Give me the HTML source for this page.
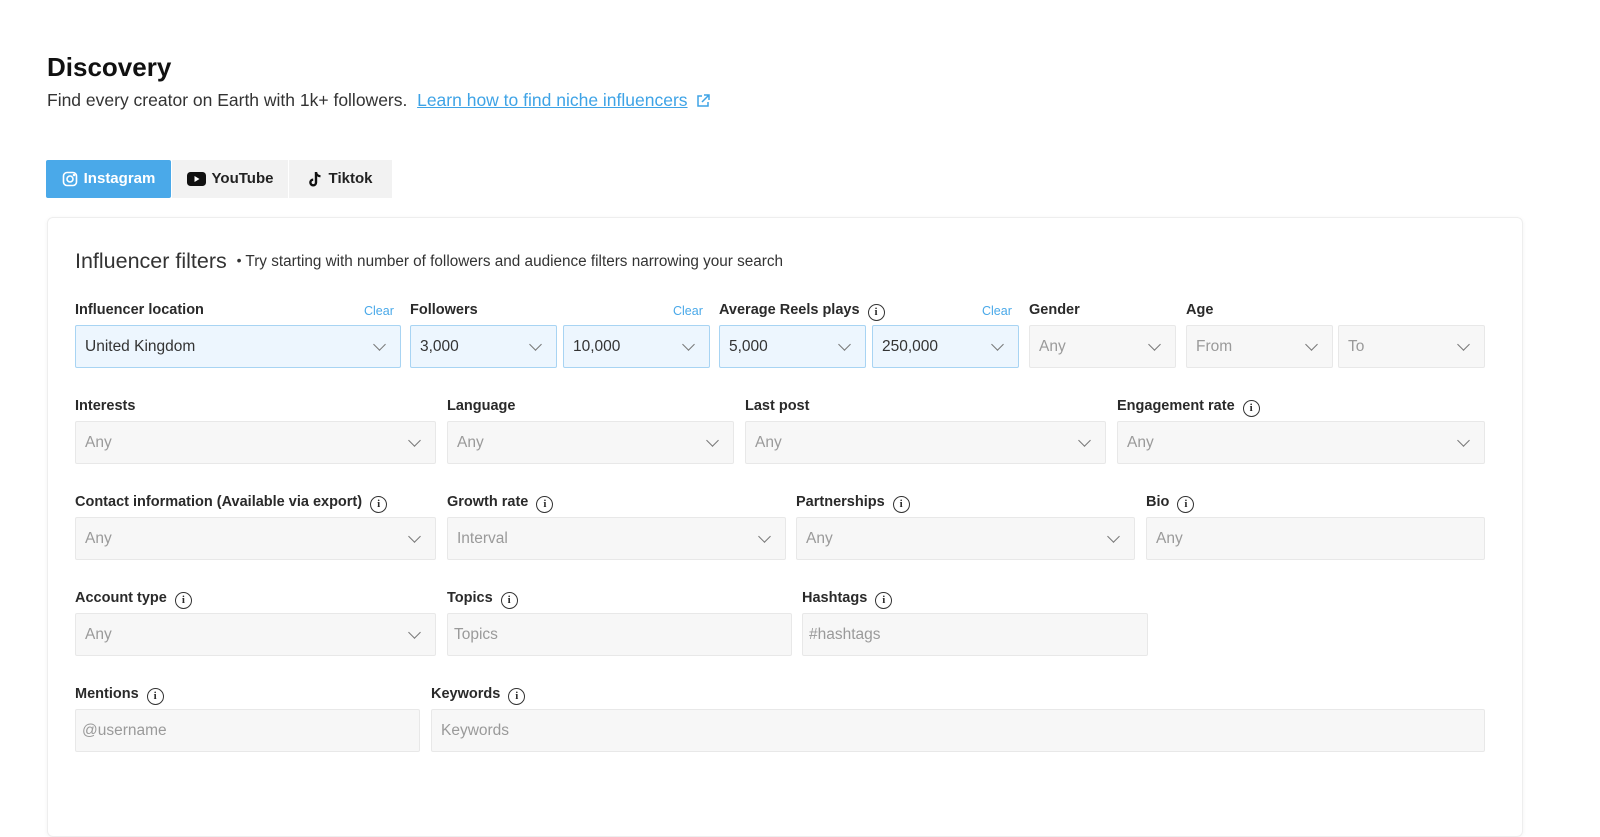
<!DOCTYPE html>
<html><head><meta charset="utf-8"><style>
*{box-sizing:border-box;margin:0;padding:0}
body{width:1600px;height:810px;background:#fff;font-family:"Liberation Sans",sans-serif;color:#222;position:relative;overflow:hidden}
.a{position:absolute}
.lbl{position:absolute;font-size:14.5px;font-weight:bold;color:#2a2a2a;line-height:18px;white-space:nowrap}
.lbl .i{display:inline-block;width:17px;height:17px;border:1.5px solid #333;border-radius:50%;font-size:11px;text-align:center;line-height:14px;margin-left:8px;vertical-align:-1px;font-family:"Liberation Serif",serif;font-weight:bold}
.clr{position:absolute;font-size:12.5px;color:#4aa9e9;line-height:16px}
.f{position:absolute;height:43px;background:#f7f7f7;border:1px solid #e8e8e8;border-radius:2px;font-size:15.5px;color:#9a9a9a;line-height:41px;padding-left:9px;white-space:nowrap}
.f.s{background:#edf6fe;border-color:#a8d4f3;color:#333}
.f.c::after{content:"";position:absolute;right:16px;top:14px;width:8px;height:8px;border-right:1.6px solid #777;border-bottom:1.6px solid #777;transform:rotate(45deg)}
.tab{position:absolute;top:160px;height:38px;background:#f2f2f2;font-size:15px;font-weight:bold;line-height:38px;display:flex;align-items:center;justify-content:center;gap:6px}
</style></head><body>
<div class="a" style="left:47px;top:52px;font-size:26px;font-weight:bold;color:#111">Discovery</div>
<div class="a" style="left:47px;top:90px;font-size:17.5px;color:#333;white-space:nowrap">Find every creator on Earth with 1k+ followers. &nbsp;<span style="color:#3ea3e6;text-decoration:underline">Learn how to find niche influencers</span>
<svg width="14" height="14" viewBox="0 0 14 14" style="vertical-align:-2px;margin-left:4px" fill="none" stroke="#3ea3e6" stroke-width="1.5"><path d="M6 2H2v10h10V8M8 1h5v5M13 1L6 8"/></svg></div>

<div class="tab" style="left:46px;width:125px;background:#4aa9e9;color:#fff;border-radius:2px"><svg width="16" height="16" viewBox="0 0 16 16" fill="none" stroke="#fff" stroke-width="1.6"><rect x="1.5" y="1.5" width="13" height="13" rx="3.5"/><circle cx="8" cy="8" r="3"/><circle cx="12" cy="4" r=".5" fill="#fff"/></svg>Instagram</div>
<div class="tab" style="left:172px;width:116px;color:#222"><svg width="19" height="14" viewBox="0 0 19 14"><rect width="19" height="14" rx="3.5" fill="#111"/><path d="M7.5 4v6l5-3z" fill="#fff"/></svg>YouTube</div>
<div class="tab" style="left:289px;width:103px;color:#222"><svg width="14" height="17" viewBox="0 0 14 17"><path d="M7 1v10.5a2.8 2.8 0 1 1-2.8-2.8" fill="none" stroke="#111" stroke-width="2.4"/><path d="M7 1.5c.5 2.2 2 3.6 4.5 3.8" fill="none" stroke="#111" stroke-width="2.2"/></svg>Tiktok</div>

<div class="a" style="left:47px;top:217px;width:1476px;height:620px;border:1px solid #eee;border-radius:6px;box-shadow:0 1px 4px rgba(0,0,0,.05)"></div>
<div class="a" style="left:75px;top:249px;font-size:21.5px;color:#333;white-space:nowrap">Influencer filters <span style="font-size:14px;color:#333;vertical-align:3px">&nbsp;•&nbsp;</span><span style="font-size:15.3px;vertical-align:2px">Try starting with number of followers and audience filters narrowing your search</span></div>

<!-- row1 -->
<div class="lbl" style="left:75px;top:301px">Influencer location</div><div class="clr" style="left:364px;top:303px">Clear</div>
<div class="lbl" style="left:410px;top:301px">Followers</div><div class="clr" style="left:673px;top:303px">Clear</div>
<div class="lbl" style="left:719px;top:301px">Average Reels plays<span class="i">i</span></div><div class="clr" style="left:982px;top:303px">Clear</div>
<div class="lbl" style="left:1029px;top:301px">Gender</div>
<div class="lbl" style="left:1186px;top:301px">Age</div>
<div class="f s c" style="left:75px;top:325px;width:326px">United Kingdom</div>
<div class="f s c" style="left:410px;top:325px;width:147px">3,000</div>
<div class="f s c" style="left:563px;top:325px;width:147px">10,000</div>
<div class="f s c" style="left:719px;top:325px;width:147px">5,000</div>
<div class="f s c" style="left:872px;top:325px;width:147px">250,000</div>
<div class="f c" style="left:1029px;top:325px;width:147px">Any</div>
<div class="f c" style="left:1186px;top:325px;width:147px">From</div>
<div class="f c" style="left:1338px;top:325px;width:147px">To</div>

<!-- row2 -->
<div class="lbl" style="left:75px;top:397px">Interests</div>
<div class="lbl" style="left:447px;top:397px">Language</div>
<div class="lbl" style="left:745px;top:397px">Last post</div>
<div class="lbl" style="left:1117px;top:397px">Engagement rate<span class="i">i</span></div>
<div class="f c" style="left:75px;top:421px;width:361px">Any</div>
<div class="f c" style="left:447px;top:421px;width:287px">Any</div>
<div class="f c" style="left:745px;top:421px;width:361px">Any</div>
<div class="f c" style="left:1117px;top:421px;width:368px">Any</div>

<!-- row3 -->
<div class="lbl" style="left:75px;top:493px">Contact information (Available via export)<span class="i">i</span></div>
<div class="lbl" style="left:447px;top:493px">Growth rate<span class="i">i</span></div>
<div class="lbl" style="left:796px;top:493px">Partnerships<span class="i">i</span></div>
<div class="lbl" style="left:1146px;top:493px">Bio<span class="i">i</span></div>
<div class="f c" style="left:75px;top:517px;width:361px">Any</div>
<div class="f c" style="left:447px;top:517px;width:339px">Interval</div>
<div class="f c" style="left:796px;top:517px;width:339px">Any</div>
<div class="f" style="left:1146px;top:517px;width:339px">Any</div>

<!-- row4 -->
<div class="lbl" style="left:75px;top:589px">Account type<span class="i">i</span></div>
<div class="lbl" style="left:447px;top:589px">Topics<span class="i">i</span></div>
<div class="lbl" style="left:802px;top:589px">Hashtags<span class="i">i</span></div>
<div class="f c" style="left:75px;top:613px;width:361px">Any</div>
<div class="f" style="left:447px;top:613px;width:345px;padding-left:6px">Topics</div>
<div class="f" style="left:802px;top:613px;width:346px;padding-left:6px">#hashtags</div>

<!-- row5 -->
<div class="lbl" style="left:75px;top:685px">Mentions<span class="i">i</span></div>
<div class="lbl" style="left:431px;top:685px">Keywords<span class="i">i</span></div>
<div class="f" style="left:75px;top:709px;width:345px;padding-left:6px">@username</div>
<div class="f" style="left:431px;top:709px;width:1054px">Keywords</div>
</body></html>
